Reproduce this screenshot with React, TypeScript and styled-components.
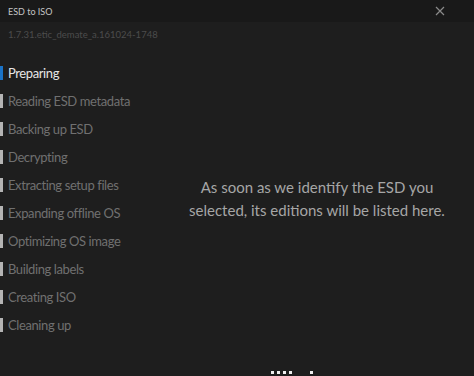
import React from "react";
import styled, { createGlobalStyle } from "styled-components";

const steps = [
  "Preparing",
  "Reading ESD metadata",
  "Backing up ESD",
  "Decrypting",
  "Extracting setup files",
  "Expanding offline OS",
  "Optimizing OS image",
  "Building labels",
  "Creating ISO",
  "Cleaning up",
];

const GlobalStyle = createGlobalStyle`
  html, body {
    margin: 0;
    padding: 0;
    background: #1e1e1e;
  }
  body {
    font-family: "Lato", "Noto Sans", sans-serif;
  }
`;

const App = () => {
  const current = 0;

  return (
    <>
      <GlobalStyle />
      <Window>
        <TitleBar>
          <Title>ESD to ISO</Title>
          <CloseButton aria-label="Close">
            <svg width="10" height="10" viewBox="0 0 10 10">
              <path d="M1 1 L9 9 M9 1 L1 9" stroke="#8a8a8a" strokeWidth="1.2" />
            </svg>
          </CloseButton>
        </TitleBar>
        <Body>
          <Sidebar>
            <Build>1.7.31.etic_demate_a.161024-1748</Build>
            <StepList>
              {steps.map((step, i) => (
                <Step key={step} active={i === current}>
                  <Marker active={i === current} />
                  {step}
                </Step>
              ))}
            </StepList>
          </Sidebar>
          <Content>
            <Message>
              As soon as we identify the ESD you
              <br />
              selected, its editions will be listed here.
            </Message>
          </Content>
        </Body>
        <Progress>
          <Dot />
          <Dot />
          <Dot />
          <Dot />
          <Gap />
          <Dot />
        </Progress>
      </Window>
    </>
  );
};

const Window = styled.div`
  position: relative;
  width: 474px;
  height: 376px;
  display: flex;
  flex-direction: column;
  background: #1e1e1e;
  overflow: hidden;
`;

const TitleBar = styled.div`
  height: 22px;
  display: flex;
  align-items: center;
  justify-content: space-between;
  padding-left: 8px;
  background: #191919;
`;

const Title = styled.span`
  font-size: 9px;
  color: #c4c4c4;
`;

const CloseButton = styled.div`
  width: 26px;
  height: 22px;
  margin-right: 21px;
  display: flex;
  align-items: center;
  justify-content: center;
`;

const Body = styled.div`
  flex: 1;
  display: flex;
`;

const Sidebar = styled.div`
  width: 160px;
  display: flex;
  flex-direction: column;
`;

const Build = styled.div`
  padding: 7px 0 0 8px;
  height: 23px;
  font-size: 9.5px;
  white-space: nowrap;
  color: #4c4c4c;
`;

const StepList = styled.ul`
  list-style: none;
  margin: 7px 0 0;
  padding: 0;
`;

const Step = styled.li<{ active: boolean }>`
  height: 28px;
  display: flex;
  align-items: center;
  gap: 5px;
  font-size: 13px;
  letter-spacing: -0.4px;
  white-space: nowrap;
  color: ${(p) => (p.active ? "#e6e6e6" : "#707070")};
`;

const Marker = styled.span<{ active: boolean }>`
  width: 3px;
  height: 14px;
  background: ${(p) => (p.active ? "#1a73c8" : "#b4b4b4")};
`;

const Content = styled.div`
  flex: 1;
  display: flex;
  justify-content: center;
  padding-top: 154px;
`;

const Message = styled.p`
  margin: 0;
  font-size: 15px;
  line-height: 23px;
  text-align: center;
  color: #a6a6a6;
`;

const Progress = styled.div`
  position: absolute;
  left: 271px;
  bottom: 2px;
  display: flex;
  gap: 3px;
`;

const Dot = styled.span`
  width: 3px;
  height: 3px;
  background: #eeeeee;
`;

const Gap = styled.span`
  width: 12px;
`;

export default App;
